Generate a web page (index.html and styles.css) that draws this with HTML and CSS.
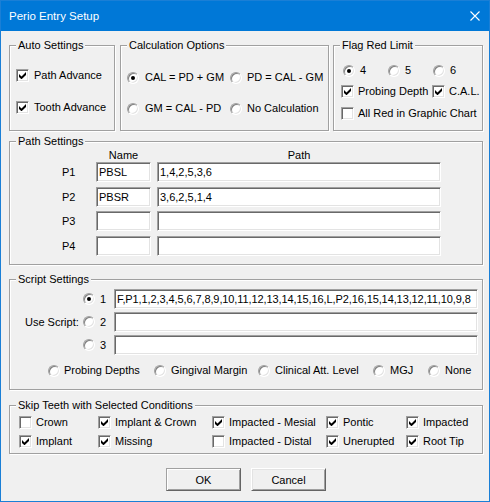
FILE: index.html
```html
<!DOCTYPE html>
<html>
<head>
<meta charset="utf-8">
<title>Perio Entry Setup</title>
<link rel="stylesheet" href="styles.css">
</head>
<body>
<div class="window">
  <div class="titlebar">
    <span class="title">Perio Entry Setup</span>
    <svg class="close" width="10" height="10" viewBox="0 0 10 10"><path d="M0.5 0.5L9.5 9.5M9.5 0.5L0.5 9.5" stroke="#fff" stroke-width="1.1" fill="none"/></svg>
  </div>
  <div class="content">
    <div class="toprow">
      <div class="group g-auto">
        <div class="legend">Auto Settings</div>
        <div class="opt wide a1"><span class="cb"><svg class="ck" width="7" height="7" viewBox="0 0 7 7"><path d="M0 2L2.5 4.5L7 0V3L2.5 7.3L0 5Z"/></svg></span><span class="txt">Path Advance</span></div>
        <div class="opt wide a2"><span class="cb"><svg class="ck" width="7" height="7" viewBox="0 0 7 7"><path d="M0 2L2.5 4.5L7 0V3L2.5 7.3L0 5Z"/></svg></span><span class="txt">Tooth Advance</span></div>
      </div>
      <div class="group g-calc">
        <div class="legend">Calculation Options</div>
        <div class="calc-grid">
          <div class="opt r6"><span class="rb on"></span><span class="txt">CAL = PD + GM</span></div>
          <div class="opt"><span class="rb"></span><span class="txt">PD = CAL - GM</span></div>
          <div class="opt r6"><span class="rb"></span><span class="txt">GM = CAL - PD</span></div>
          <div class="opt"><span class="rb"></span><span class="txt">No Calculation</span></div>
        </div>
      </div>
      <div class="group g-flag">
        <div class="legend">Flag Red Limit</div>
        <div class="flag-radios">
          <div class="opt"><span class="rb on"></span><span class="txt">4</span></div>
          <div class="opt"><span class="rb"></span><span class="txt">5</span></div>
          <div class="opt"><span class="rb"></span><span class="txt">6</span></div>
        </div>
        <div class="flag-checks">
          <div class="opt"><span class="cb"><svg class="ck" width="7" height="7" viewBox="0 0 7 7"><path d="M0 2L2.5 4.5L7 0V3L2.5 7.3L0 5Z"/></svg></span><span class="txt">Probing Depth</span></div>
          <div class="opt"><span class="cb"><svg class="ck" width="7" height="7" viewBox="0 0 7 7"><path d="M0 2L2.5 4.5L7 0V3L2.5 7.3L0 5Z"/></svg></span><span class="txt">C.A.L.</span></div>
        </div>
        <div class="opt flag-all"><span class="cb"></span><span class="txt">All Red in Graphic Chart</span></div>
      </div>
    </div>

    <div class="group g-path">
      <div class="legend">Path Settings</div>
      <div class="path-head">
        <span class="ph-name">Name</span>
        <span class="ph-path">Path</span>
      </div>
      <div class="prow first"><span class="plabel">P1</span><input class="field f-name" value="PBSL"><input class="field f-path" value="1,4,2,5,3,6"></div>
      <div class="prow"><span class="plabel">P2</span><input class="field f-name" value="PBSR"><input class="field f-path" value="3,6,2,5,1,4"></div>
      <div class="prow tight"><span class="plabel">P3</span><input class="field f-name" value=""><input class="field f-path" value=""></div>
      <div class="prow"><span class="plabel">P4</span><input class="field f-name" value=""><input class="field f-path" value=""></div>
    </div>

    <div class="group g-script">
      <div class="legend">Script Settings</div>
      <div class="srow"><span class="slabel"></span><span class="rb on"></span><span class="snum">1</span><input class="field f-script tight-text" value="F,P1,1,2,3,4,5,6,7,8,9,10,11,12,13,14,15,16,L,P2,16,15,14,13,12,11,10,9,8"></div>
      <div class="srow"><span class="slabel">Use Script:</span><span class="rb"></span><span class="snum">2</span><input class="field f-script" value=""></div>
      <div class="srow"><span class="slabel"></span><span class="rb"></span><span class="snum">3</span><input class="field f-script" value=""></div>
      <div class="sopts">
        <div class="opt so1"><span class="rb"></span><span class="txt">Probing Depths</span></div>
        <div class="opt so2"><span class="rb"></span><span class="txt">Gingival Margin</span></div>
        <div class="opt so3"><span class="rb"></span><span class="txt">Clinical Att. Level</span></div>
        <div class="opt so4"><span class="rb"></span><span class="txt">MGJ</span></div>
        <div class="opt"><span class="rb"></span><span class="txt">None</span></div>
      </div>
    </div>

    <div class="group g-skip">
      <div class="legend">Skip Teeth with Selected Conditions</div>
      <div class="skip-grid">
        <div class="opt"><span class="cb"></span><span class="txt">Crown</span></div>
        <div class="opt"><span class="cb"><svg class="ck" width="7" height="7" viewBox="0 0 7 7"><path d="M0 2L2.5 4.5L7 0V3L2.5 7.3L0 5Z"/></svg></span><span class="txt">Implant &amp; Crown</span></div>
        <div class="opt"><span class="cb"><svg class="ck" width="7" height="7" viewBox="0 0 7 7"><path d="M0 2L2.5 4.5L7 0V3L2.5 7.3L0 5Z"/></svg></span><span class="txt">Impacted - Mesial</span></div>
        <div class="opt"><span class="cb"><svg class="ck" width="7" height="7" viewBox="0 0 7 7"><path d="M0 2L2.5 4.5L7 0V3L2.5 7.3L0 5Z"/></svg></span><span class="txt">Pontic</span></div>
        <div class="opt"><span class="cb"><svg class="ck" width="7" height="7" viewBox="0 0 7 7"><path d="M0 2L2.5 4.5L7 0V3L2.5 7.3L0 5Z"/></svg></span><span class="txt">Impacted</span></div>
        <div class="opt"><span class="cb"><svg class="ck" width="7" height="7" viewBox="0 0 7 7"><path d="M0 2L2.5 4.5L7 0V3L2.5 7.3L0 5Z"/></svg></span><span class="txt">Implant</span></div>
        <div class="opt"><span class="cb"><svg class="ck" width="7" height="7" viewBox="0 0 7 7"><path d="M0 2L2.5 4.5L7 0V3L2.5 7.3L0 5Z"/></svg></span><span class="txt">Missing</span></div>
        <div class="opt"><span class="cb"></span><span class="txt">Impacted - Distal</span></div>
        <div class="opt"><span class="cb"><svg class="ck" width="7" height="7" viewBox="0 0 7 7"><path d="M0 2L2.5 4.5L7 0V3L2.5 7.3L0 5Z"/></svg></span><span class="txt">Unerupted</span></div>
        <div class="opt"><span class="cb"><svg class="ck" width="7" height="7" viewBox="0 0 7 7"><path d="M0 2L2.5 4.5L7 0V3L2.5 7.3L0 5Z"/></svg></span><span class="txt">Root Tip</span></div>
      </div>
    </div>

    <div class="buttons">
      <button class="btn default">OK</button>
      <button class="btn">Cancel</button>
    </div>
  </div>
</div>
</body>
</html>
```
FILE: styles.css
```css
html, body {
  margin: 0;
  padding: 0;
  background: #f0f0f0;
}

.window {
  width: 490px;
  height: 502px;
  box-sizing: border-box;
  border: 1px solid #1a7fd6;
  background: #f0f0f0;
  font-family: "Liberation Sans", Arial, sans-serif;
  font-size: 11px;
  line-height: 13px;
  color: #000;
  display: flex;
  flex-direction: column;
}

.titlebar {
  height: 30px;
  flex: none;
  background: #0078d7;
  color: #fff;
  display: flex;
  align-items: center;
  justify-content: space-between;
  padding: 0 9px 0 8px;
}

.title {
  font-size: 11.5px;
}

.close {
  display: block;
}

.content {
  padding: 0 6px 0 8px;
  display: flex;
  flex-direction: column;
}

.toprow {
  display: flex;
  margin-top: 14px;
}

.group {
  box-sizing: border-box;
  border: 1px solid #a0a0a0;
  box-shadow: 1px 1px 0 #fff, inset 1px 1px 0 #fff;
  display: flex;
  flex-direction: column;
  flex: none;
}

.toprow .group {
  height: 86px;
}

.g-auto { width: 106px; }
.g-calc { width: 209px; margin-left: 5px; }
.g-flag { width: 150px; margin-left: 4px; }

.legend {
  align-self: flex-start;
  margin: -7px 0 0 6px;
  padding: 0 2px;
  height: 13px;
  background: #f0f0f0;
  white-space: nowrap;
}

.opt {
  display: flex;
  align-items: center;
  height: 13px;
  white-space: nowrap;
}

.txt {
  margin-left: 4px;
}

.rb + .txt {
  margin-left: 5px;
}

.opt.r6 .txt { margin-left: 6px; }
.opt.wide .txt { margin-left: 5px; }

/* checkbox */
.cb {
  box-sizing: border-box;
  width: 13px;
  height: 13px;
  flex: none;
  border: 1px solid;
  border-color: #a0a0a0 #ffffff #ffffff #a0a0a0;
  box-shadow: inset 1px 1px 0 #696969, inset -1px -1px 0 #e3e3e3;
  background: #fff;
  display: flex;
  align-items: center;
  justify-content: center;
}

.ck {
  display: block;
  fill: #000;
}

/* radio */
.rb {
  box-sizing: border-box;
  width: 12px;
  height: 12px;
  flex: none;
  border-radius: 50%;
  border: 1px solid;
  border-color: #a0a0a0 #ffffff #ffffff #a0a0a0;
  box-shadow: inset 1px 1px 0 #808080, inset -1px -1px 0 #e3e3e3;
  background: #fff;
  display: flex;
  align-items: center;
  justify-content: center;
}

.rb.on::after {
  content: "";
  width: 4px;
  height: 4px;
  border-radius: 50%;
  background: #000;
}

/* auto settings */
.a1 { margin: 17px 0 0 6px; }
.a2 { margin: 19px 0 0 6px; }

/* calculation options */
.calc-grid {
  display: grid;
  grid-template-columns: 103px auto;
  row-gap: 18px;
  margin: 19px 0 0 6px;
}

/* flag red limit */
.flag-radios {
  display: grid;
  grid-template-columns: 45px 45px auto;
  margin: 12px 0 0 9px;
}

.flag-checks {
  display: grid;
  grid-template-columns: 91px auto;
  margin: 8px 0 0 7px;
}

.flag-all {
  margin: 9px 0 0 7px;
}

/* text fields */
.field {
  box-sizing: border-box;
  height: 20px;
  flex: none;
  margin: 0;
  padding: 0 0 0 2px;
  border: 1px solid;
  border-color: #a0a0a0 #ffffff #ffffff #a0a0a0;
  box-shadow: inset 1px 1px 0 #696969, inset -1px -1px 0 #e3e3e3;
  background: #fff;
  font-family: "Liberation Sans", Arial, sans-serif;
  font-size: 11px;
  color: #000;
  outline: none;
}

.tight-text {
  letter-spacing: -0.1px;
}

/* path settings */
.g-path {
  height: 124px;
  margin-top: 10px;
}

.path-head {
  display: flex;
  height: 13px;
  margin-top: 1px;
}

.ph-name {
  width: 55px;
  margin-left: 86px;
  text-align: center;
}

.ph-path {
  width: 284px;
  margin-left: 6px;
  text-align: center;
}

.prow {
  display: flex;
  align-items: center;
  height: 20px;
  margin-top: 5px;
}

.prow.first { margin-top: 0; }
.prow.tight { margin-top: 4px; }

.plabel {
  width: 34px;
  padding-left: 52px;
}

.f-name { width: 55px; }
.f-path { width: 284px; margin-left: 6px; }

/* script settings */
.g-script {
  height: 111px;
  margin-top: 14px;
}

.srow {
  display: flex;
  align-items: center;
  height: 20px;
  margin-top: 3px;
}

.slabel {
  width: 58px;
  padding-left: 15px;
  white-space: nowrap;
}

.snum {
  width: 14px;
  margin-left: 5px;
}

.f-script { width: 364px; }

.sopts {
  display: flex;
  align-items: center;
  height: 13px;
  margin: 9px 0 0 38px;
}

.so1 { width: 106px; }
.so2 { width: 104px; }
.so3 { width: 115px; }
.so4 { width: 55px; }

.sopts .txt { margin-left: 5px; }
.so1 .txt { margin-left: 4px; }

/* skip teeth */
.g-skip {
  height: 49px;
  margin-top: 15px;
}

.skip-grid {
  display: grid;
  grid-template-columns: 79px 114px 114px 80px auto;
  row-gap: 6px;
  margin: 4px 0 0 9px;
}

/* buttons */
.buttons {
  display: flex;
  justify-content: center;
  gap: 10px;
  margin-top: 14px;
}

.btn {
  box-sizing: border-box;
  width: 75px;
  height: 23px;
  margin: 0;
  padding: 0;
  border: 1px solid;
  border-color: #ffffff #646464 #646464 #ffffff;
  box-shadow: inset 1px 1px 0 #e3e3e3, inset -1px -1px 0 #a0a0a0;
  background: #f0f0f0;
  font-family: "Liberation Sans", Arial, sans-serif;
  font-size: 11px;
  color: #000;
  display: flex;
  align-items: center;
  justify-content: center;
}

.btn.default {
  border-color: #a0a0a0 #646464 #646464 #a0a0a0;
  box-shadow: inset 1px 1px 0 #ffffff, inset -1px -1px 0 #a0a0a0;
}
```
